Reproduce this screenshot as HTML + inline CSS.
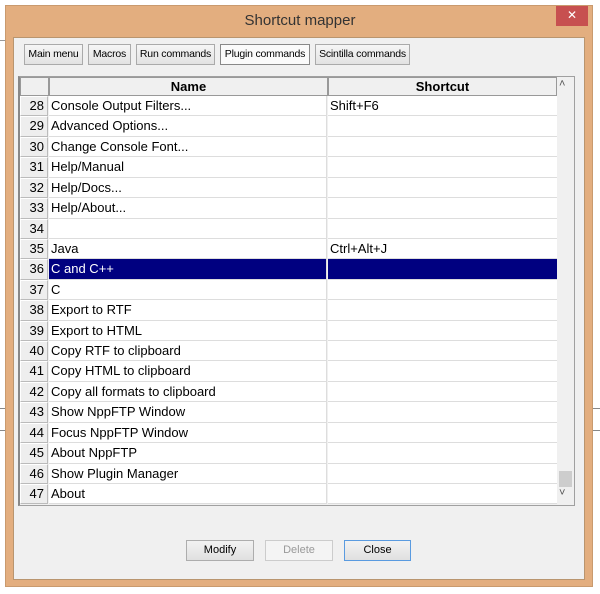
<!DOCTYPE html>
<html><head><style>
*{margin:0;padding:0;box-sizing:border-box}
body{width:600px;height:594px;background:#fff;position:relative;overflow:hidden;font-family:"Liberation Sans",sans-serif}
.a{position:absolute}
.frame{left:5px;top:5px;width:588px;height:582px;background:#e3ae7f;border:1px solid #c99a6e}
.title{left:0;top:12px;width:600px;text-align:center;font-size:15px;color:#333}
.x{left:556px;top:6px;width:32px;height:20px;background:#c75050;color:#fff;font-size:12px;text-align:center;line-height:19px}
.client{left:13px;top:37px;width:572px;height:543px;background:#f0f0f0;border:1px solid #b9956f}
.tab{top:44px;height:21px;border:1px solid #aaa;background:linear-gradient(#f6f6f6,#e2e2e2);font-size:10.5px;line-height:19px;text-align:center;color:#000;white-space:nowrap;overflow:hidden;letter-spacing:-0.2px}
.grid{left:18px;top:76px;width:557px;height:430px;background:#f0f0f0;border:1px solid #a0a0a0;border-left:2px solid #888}
.hd{top:77px;height:19px;background:#f0f0f0;border:1px solid #999;font-weight:bold;font-size:13px;text-align:center;line-height:18px}
.num{left:20px;width:28px;background:#eee;border:1px solid #bbb;border-top-color:#fff;border-left-color:#fff;font-size:13px;text-align:right;padding-right:3px}
.c{background:#fff;font-size:13px;padding-left:2px;border-bottom:1px solid #ddd;white-space:nowrap;overflow:hidden}
.n{left:49px;width:278px;border-right:1px solid #ddd}
.s{left:328px;width:229px}
.sel{background:#000080;color:#fff}
.btn{top:540px;height:21px;border:1px solid #adadad;background:linear-gradient(#f2f2f2,#e0e0e0);font-size:11px;text-align:center;line-height:19px}
</style></head><body>
<div class="a" style="left:0;top:40px;width:6px;height:1px;background:#999"></div>
<div class="a" style="left:0;top:408px;width:6px;height:1px;background:#888"></div>
<div class="a" style="left:0;top:430px;width:6px;height:1px;background:#888"></div>
<div class="a" style="left:593px;top:408px;width:7px;height:1px;background:#888"></div>
<div class="a" style="left:593px;top:430px;width:7px;height:1px;background:#888"></div>
<div class="a frame"></div>
<div class="a title">Shortcut mapper</div>
<div class="a x">✕</div>
<div class="a client"></div>
<div class="a tab" style="left:24px;width:59px">Main menu</div>
<div class="a tab" style="left:88px;width:43px">Macros</div>
<div class="a tab" style="left:136px;width:79px">Run commands</div>
<div class="a tab" style="left:220px;width:90px;background:#fafafa;border-color:#888">Plugin commands</div>
<div class="a tab" style="left:315px;width:95px">Scintilla commands</div>
<div class="a grid"></div>
<div class="a hd" style="left:20px;width:29px"></div>
<div class="a hd" style="left:49px;width:279px">Name</div>
<div class="a hd" style="left:328px;width:229px">Shortcut</div>
<div class="a" style="left:557px;top:77px;width:17px;height:428px;background:#f0f0f0"></div>
<div class="a" style="left:559px;top:78px;font-size:11px;color:#555">˄</div>
<div class="a" style="left:559px;top:487px;font-size:11px;color:#555">˅</div>
<div class="a" style="left:559px;top:471px;width:13px;height:16px;background:#cdcdcd"></div>
<div id="rows"></div>
<script>
var d=[["28","Console Output Filters...","Shift+F6"],["29","Advanced Options...",""],["30","Change Console Font...",""],["31","Help/Manual",""],["32","Help/Docs...",""],["33","Help/About...",""],["34","",""],["35","Java","Ctrl+Alt+J"],["36","C and C++",""],["37","C",""],["38","Export to RTF",""],["39","Export to HTML",""],["40","Copy RTF to clipboard",""],["41","Copy HTML to clipboard",""],["42","Copy all formats to clipboard",""],["43","Show NppFTP Window",""],["44","Focus NppFTP Window",""],["45","About NppFTP",""],["46","Show Plugin Manager",""],["47","About",""]];
var h="";
for(var i=0;i<d.length;i++){var t=Math.round(96+i*20.42);var H=Math.round(96+(i+1)*20.42)-t;var sel=i==8?" sel":"";
h+='<div class="a num" style="top:'+t+'px;height:'+H+'px;line-height:'+(H-3)+'px">'+d[i][0]+'</div>';
h+='<div class="a c n'+sel+'" style="top:'+t+'px;height:'+H+'px;line-height:'+(H-1)+'px">'+d[i][1]+'</div>';
h+='<div class="a c s'+sel+'" style="top:'+t+'px;height:'+H+'px;line-height:'+(H-1)+'px">'+d[i][2]+'</div>';}
document.getElementById("rows").innerHTML=h;
</script>
<div class="a btn" style="left:186px;width:68px">Modify</div>
<div class="a btn" style="left:265px;width:68px;color:#999;border-color:#ccc;background:#f4f4f4">Delete</div>
<div class="a btn" style="left:344px;width:67px;border-color:#5a9be0">Close</div>
</body></html>
